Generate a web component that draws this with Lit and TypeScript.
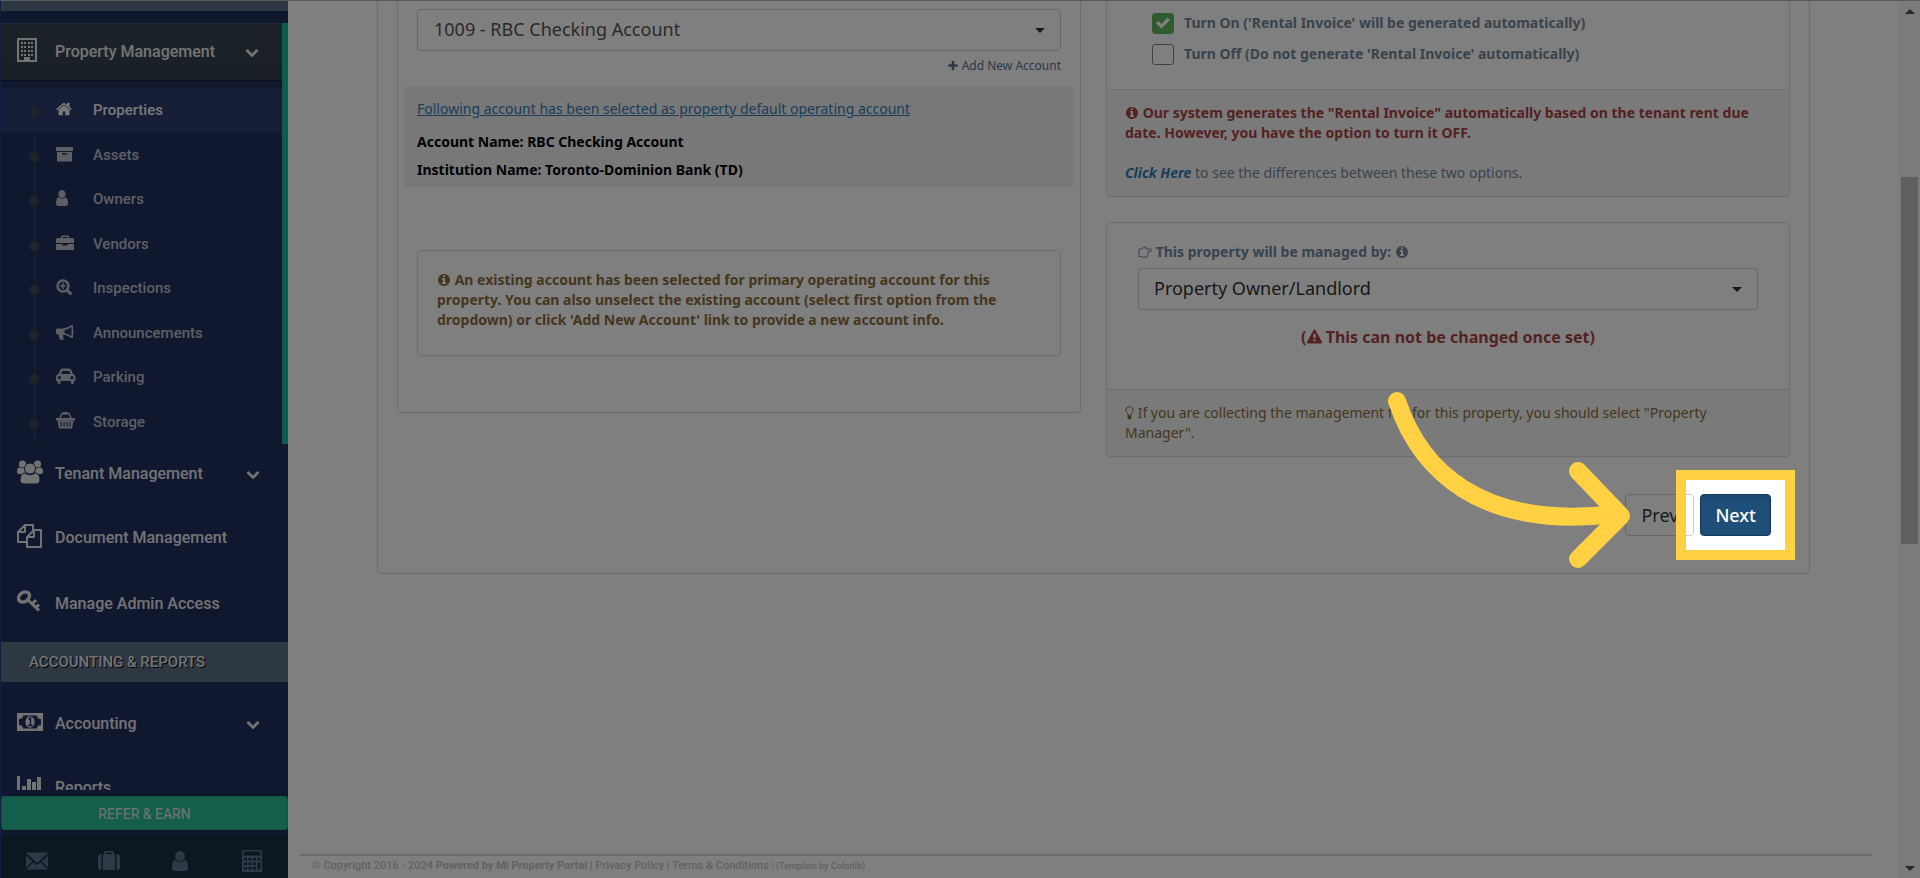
import { LitElement, html, svg, css, type TemplateResult } from "lit";
import { customElement, state } from "lit/decorators.js";

const fa = (d: string, box = "0 0 1792 1792") => html`<svg class="fa" viewBox=${box} aria-hidden="true"><path d=${d} /></svg>`;

const INFO =
  "M1152 1376v-160q0-14-9-23t-23-9h-96v-512q0-14-9-23t-23-9h-320q-14 0-23 9t-9 23v160q0 14 9 23t23 9h96v320h-96q-14 0-23 9t-9 23v160q0 14 9 23t23 9h448q14 0 23-9t9-23zm-128-896v-160q0-14-9-23t-23-9h-192q-14 0-23 9t-9 23v160q0 14 9 23t23 9h192q14 0 23-9t9-23zm640 416q0 209-103 385.5t-279.5 279.5-385.5 103-385.5-103-279.5-279.5-103-385.5 103-385.5 279.5-279.5 385.5-103 385.5 103 279.5 279.5 103 385.5z";
const PLUS =
  "M1600 736v192q0 40-28 68t-68 28h-416v416q0 40-28 68t-68 28h-192q-40 0-68-28t-28-68v-416h-416q-40 0-68-28t-28-68v-192q0-40 28-68t68-28h416v-416q0-40 28-68t68-28h192q40 0 68 28t28 68v416h416q40 0 68 28t28 68z";
const WARN =
  "M1024 1375v-190q0-14-9.5-23.5t-22.5-9.5h-192q-13 0-22.5 9.5t-9.5 23.5v190q0 14 9.5 23.5t22.5 9.5h192q13 0 22.5-9.5t9.5-23.5zm-2-374l18-459q0-12-10-19-13-11-24-11h-220q-11 0-24 11-10 7-10 21l17 457q0 10 10 16.5t24 6.5h185q14 0 23.5-6.5t10.5-16.5zm-14-934l768 1408q35 63-2 126-17 29-46.5 46t-63.5 17h-1536q-34 0-63.5-17t-46.5-46q-37-63-2-126l768-1408q17-31 47-49t65-18 65 18 47 49z";
const CHEVRON =
  "M1683 808l-742 741q-19 19-45 19t-45-19l-742-741q-19-19-19-45.5t19-45.5l166-165q19-19 45-19t45 19l531 531 531-531q19-19 45-19t45 19l166 165q19 19 19 45.5t-19 45.5z";
const HOME =
  "M1472 992v480q0 26-19 45t-45 19h-384v-384h-256v384h-384q-26 0-45-19t-19-45v-480q0-1 .5-3t.5-3l575-474 575 474q1 2 1 6zm223-69l-62 74q-8 9-21 11h-3q-13 0-21-7l-692-577-692 577q-12 8-24 7-13-2-21-11l-62-74q-8-10-7-23.5t11-21.5l719-599q32-26 76-26t76 26l244 204v-195q0-14 9-23t23-9h192q14 0 23 9t9 23v408l219 182q10 8 11 21.5t-7 23.5z";
const USER =
  "M1536 1399q0 109-62.5 187t-150.5 78h-854q-88 0-150.5-78t-62.5-187q0-85 8.5-160.5t31.5-152 58.5-131 94-89 134.5-34.5q131 128 313 128t313-128q76 0 134.5 34.5t94 89 58.5 131 31.5 152 8.5 160.5zm-256-887q0 159-112.5 271.5t-271.5 112.5-271.5-112.5-112.5-271.5 112.5-271.5 271.5-112.5 271.5 112.5 112.5 271.5z";

const ic = (w: number, h: number, body: unknown) =>
  html`<svg class="ic" width=${w} height=${h} viewBox="0 0 ${w} ${h}" aria-hidden="true">${body}</svg>`;

const windows = [4, 8, 12, 16].flatMap((y) => [4, 7, 11, 14].map((x) => svg`<rect x=${x} y=${y} width="2" height="2"/>`));

const ICONS: Record<string, TemplateResult> = {
  building: ic(20, 24, svg`<rect x="1" y="1" width="18" height="22" fill="none" stroke="currentColor" stroke-width="2"/>${windows}<path d="M7 19h6v4H7z"/>`),
  users: ic(26, 24, svg`<circle cx="5.5" cy="4" r="3.6"/><circle cx="20.5" cy="4" r="3.6"/><path d="M0 12q0-5 3-4.500q2 1 5 .5q-1 3 1 6H2Q0 14 0 12zM26 12q0-5-3-4.500q-2 1-5 .5q1 3-1 6h7Q26 14 26 12z"/><g stroke="#203060" stroke-width="1"><circle cx="13" cy="8.500" r="5.500"/><path d="M3 20.500q0-7.500 5-7.500q5 3.500 10 0q5 0 5 7.500q0 3.500-4 3.500H7q-4 0-4-3.500z"/></g>`),
  copy: ic(26, 24, svg`<g fill="none" stroke="currentColor" stroke-width="2" stroke-linejoin="round"><path d="M9 18H1V8l7-7h8v5M8 1v7H1"/><path d="M10 23V13l7-7h7v17zM17 6v7h-7"/></g>`),
  key: ic(26, 24, svg`<g fill="none" stroke="currentColor"><ellipse cx="7" cy="7" rx="6" ry="4.500" stroke-width="3.500" transform="rotate(-38 7 7)"/><path d="M11 10l11 10.500M15 14l4-4M19 17.500l3-3" stroke-width="3"/></g>`),
  money: ic(26, 18, svg`<path fill-rule="evenodd" d="M0 0h26v18H0zM6 2.500Q6 6 2 6v6q4 0 4 3.500h14q0-3.500 4-3.500V6q-4 0-4-3.500z"/><ellipse cx="13" cy="9" rx="4.600" ry="5.800"/><path d="M11.500 6.500L13.500 5v7M11 12.500h4.500" fill="none" stroke="#203060" stroke-width="1.500"/>`),
  chart: ic(26, 20, svg`<path d="M0 0h3v17h23v2H0zM5 10h4v6H5zM10 3h4v13h-4zM15 6h4v10h-4zM20 1h4v15h-4z"/>`),
  home: html`<svg class="ic" width="16" height="16" viewBox="64 64 1664 1664" aria-hidden="true"><path d=${HOME} /></svg>`,
  box: ic(17, 16, svg`<path fill-rule="evenodd" d="M0 1h17v4H0zM1 6h15v9.500H1zM6 7v1.500h5V7z"/>`),
  user: html`<svg class="ic" width="12" height="16" viewBox="256 128 1280 1536" preserveAspectRatio="none" aria-hidden="true"><path d=${USER} /></svg>`,
  briefcase: ic(18, 16, svg`<path fill-rule="evenodd" d="M5 3V1.500Q5 .5 6 .5h6q1 0 1 1V3h3.500Q18 3 18 4.500V8H0V4.500Q0 3 1.500 3zM6.500 3h5V2h-5zM0 9h6.500v1.500h5V9H18v6H0z"/>`),
  zoom: ic(17, 16, svg`<g fill="none" stroke="currentColor"><circle cx="7" cy="7" r="5.500" stroke-width="2.500"/><path d="M4 7h6M7 4v6" stroke-width="1.500"/><path d="M11 11l4.500 4.500" stroke-width="3"/></g>`),
  horn: ic(18, 16, svg`<path fill-rule="evenodd" d="M1 4.500h6Q12 4 15.500 1H17v5q1.500 1.500 0 3v5h-1.500Q12 11 7.500 10.500Q6.500 12 8 15q-2 1.500-4 .5Q2.500 13 2.800 10.500H1.500Q0 10.500 0 9V6Q0 4.500 1 4.500zM15.500 3Q12 5.500 8.500 6v3.200q3.500.3 7 3z"/>`),
  car: ic(20, 16, svg`<path fill-rule="evenodd" d="M2.500 6L4.200 2Q4.800.500 6.500.500h6.500Q14.700.500 15.300 2L17 6q2.500.5 2.500 3v4h-1.500v1.500q0 1.500-1.500 1.500T15 14.500V13H4.500v1.500Q4.500 16 3 16T1.500 14.500V13H0V9Q0 6.500 2.500 6zM5 6h9.500L13.300 3H6.200zM3.500 8a1.600 1.600 0 1 0 .01 0zM16 8a1.600 1.600 0 1 0 .01 0z"/>`),
  basket: ic(19, 17, svg`<path d="M3.500 7L6 1.500h7L15.500 7" fill="none" stroke="currentColor" stroke-width="1.500"/><path d="M7 0h5v2.500H7zM0 6h19v2.500H0z"/><path fill-rule="evenodd" d="M1.500 8.500h16L16 16.500H3zM4.500 10v4.500h1.200V10zM7.500 10v4.500h1.200V10zM10.500 10v4.500h1.200V10zM13.300 10v4.500h1.200V10z"/>`),
  mail: ic(22, 18, svg`<path d="M1 .500h20q1 0 .5 1L11 11 .500 1.500Q0 .500 1 .500zM0 3.500L6.500 9.500 0 15.500zM22 3.500L15.500 9.500l6.500 6zM7.500 10.500L11 13.300l3.500-2.800 7 6.500q-.5.500-1 .5h-19q-.5 0-1-.5z"/>`),
  suitcase: ic(22, 20, svg`<path d="M7 3V2q0-1.500 1.500-1.500h5Q15 .500 15 2v1" fill="none" stroke="currentColor" stroke-width="1.800"/><path d="M5 3h12v16H5zM3.500 3v16Q0 19 0 16.500v-11Q0 3 3.500 3zM18.500 3v16q3.500 0 3.500-2.500v-11Q22 3 18.500 3z"/>`),
  person: html`<svg class="ic" width="16" height="20" viewBox="256 128 1280 1536" preserveAspectRatio="none" aria-hidden="true"><path d=${USER} /></svg>`,
  calc: ic(20, 22, svg`<path fill-rule="evenodd" d="M0 0h20v22H0zM1.500 1.500v4h17v-4zM2 8v2.500h3V8zM6.500 8v2.500h3V8zM11 8v2.500h3V8zM15.500 8v2.500h3V8zM2 12.500V15h3v-2.500zM6.500 12.500V15h3v-2.500zM11 12.500V15h3v-2.500zM15.500 12.500v7h3v-7zM2 17v2.500h3V17zM6.500 17v2.500h3V17zM11 17v2.500h3V17z"/>`),
};

const CHILDREN: [string, string][] = [
  ["home", "Properties"],
  ["box", "Assets"],
  ["user", "Owners"],
  ["briefcase", "Vendors"],
  ["zoom", "Inspections"],
  ["horn", "Announcements"],
  ["car", "Parking"],
  ["basket", "Storage"],
];

@customElement("app-root")
export class AppRoot extends LitElement {
  @state() private invoice = "on";

  static styles = css`
    :host {
      display: block;
      height: 100vh;
      overflow: hidden;
      font-family: "Noto Sans", sans-serif;
      font-size: 14px;
      line-height: 20px;
      color: #73879c;
      position: relative;
    }
    * { box-sizing: border-box; }
    a { color: inherit; text-decoration: none; }
    svg { fill: currentColor; display: block; flex: none; }
    .fa { display: inline-block; width: 14px; height: 14px; vertical-align: -2px; }
    .app { display: flex; height: 100%; border-top: 1px solid #b4b4b4; background: #fff; }

    /* Sidebar */
    .side {
      width: 288px; flex: none; display: flex; flex-direction: column;
      background: #203060; border-left: 1px solid #203e80;
      font-family: Roboto, sans-serif; color: #e7e7e7;
    }
    .nav { flex: 1; min-height: 0; overflow: hidden; }
    .strip { height: 10px; background: #5c7084; margin-bottom: 12px; }
    .group { border-right: 6px solid #1abb9c; height: 421px; }
    .row {
      display: grid; grid-template-columns: 38px 1fr 42px; align-items: center;
      height: 64px; padding-left: 16px; font-size: 16px; font-weight: 500;
    }
    .row .fa { width: 14px; height: 14px; }
    .row .ic { margin-bottom: 4px; }
    .row.open {
      height: 58px; background: linear-gradient(#364650, #32424c);
      border-top: 1px solid #40525e; border-bottom: 1px solid #141d38;
      grid-template-columns: 38px 1fr 37px;
    }
    .row.first { height: 60px; }
    .row.tall { height: 68px; }
    .kids { margin: 7px 0 0; padding: 0; list-style: none; height: 356px; display: grid; grid-auto-rows: 1fr; }
    .kid {
      display: grid; grid-template-columns: 37px 1fr; align-items: center;
      padding-left: 55px; font-size: 15px; font-weight: 500; color: #bcbfca; position: relative;
    }
    .kid.current { background: #2d3b6c; color: #f0f0f0; }
    .kid .ic { margin-bottom: 2px; }
    .kid::before { content: ""; position: absolute; left: 33px; top: 0; bottom: 0; width: 1px; background: #3a4a56; }
    .kid::after { content: ""; position: absolute; left: 28px; top: 19px; width: 10px; height: 10px; border-radius: 50%; background: #3a4a56; }
    .section {
      height: 40px; margin: 6px 0 10px; padding-left: 28px; background: #5c7084; font-size: 15px; line-height: 40px;
      font-weight: 500; text-shadow: 1px 1px #000;
    }
    .refer {
      border: 1px solid #26a98a; border-radius: 3px; background: #28be96; color: #e7e7e7; height: 34px; margin: 6px 0;
      font: 400 14px/20px Roboto, sans-serif; padding: 2px 0 0;
    }
    .tools { height: 42px; background: #1a2e40; display: grid; grid-template-columns: repeat(4, 1fr); color: #5a738e; }
    .tools a { display: flex; align-items: center; justify-content: center; padding-top: 8px; }

    /* Content */
    .main { flex: 1; display: flex; flex-direction: column; }
    .well {
      margin: 0 89px; border: 1px solid #ddd; border-top: 0; border-radius: 0 0 4px 4px; padding: 0 19px 30px;
    }
    .cols { display: grid; grid-template-columns: 1fr 1fr; gap: 25px; align-items: start; }
    .panel { border: 1px solid #ddd; border-radius: 4px; box-shadow: 0 1px 1px rgba(0, 0, 0, 0.05); }
    .cut { border-top: 0; border-top-left-radius: 0; border-top-right-radius: 0; }
    .left { padding: 8px 19px 56px; }
    .pick { display: grid; align-items: center; }
    .pick > * { grid-area: 1 / 1; }
    select {
      appearance: none; width: 100%; height: 42px; border: 1px solid #ccc; border-radius: 4px; background: #fff;
      font: 400 18px/24px "Noto Sans", sans-serif; padding: 0 30px 2px 16px; color: #555;
    }
    .dark select { color: #333; padding-left: 15px; }
    .pick svg { justify-self: end; margin-right: 16px; width: 10px; height: 5px; color: #333; pointer-events: none; }
    .add { display: block; text-align: right; font-size: 12px; line-height: 20px; margin-top: 5px; color: #5a738e; }
    .add .fa { width: 12px; height: 12px; }
    .chosen { margin: 11px -12px 0 -13px; padding: 12px 13px; height: 100px; background: #f0f0f0; color: #000; font-weight: 700; }
    .chosen a { font-weight: 400; color: #337ab7; text-decoration: underline; }
    .chosen p { margin: 0 0 8px; }
    .chosen p:first-child { margin-bottom: 13px; }
    .note { margin-top: 63px; border: 1px solid #ddd; border-radius: 4px; box-shadow: 0 1px 1px rgba(0, 0, 0, 0.05); padding: 19px 19px 25px; color: #8a6d3b; font-weight: 700; }
    .note p { margin: 0; }
    .right { display: grid; gap: 25px; }
    .opts { padding: 11px 45px 24px; display: grid; gap: 9px; font-weight: 700; }
    .opts label { display: flex; align-items: center; gap: 10px; height: 22px; }
    .tick { display: grid; place-items: center; width: 22px; height: 22px; }
    .tick > * { grid-area: 1 / 1; }
    .tick svg { color: #fff; pointer-events: none; }
    input { appearance: none; margin: 0; width: 22px; height: 21px; border: 1px solid #73879c; border-radius: 3px; background: #fff; }
    input:checked { background: #5cb85c; border-color: #5cb85c; }
    .foot { border-top: 1px solid #ddd; background: #f5f5f5; padding: 13px 18px; border-radius: 0 0 4px 4px; }
    .foot p { margin: 0; }
    .foot .red { margin-bottom: 20px; color: #a94442; font-weight: 700; }
    .foot a { color: #337ab7; font-weight: 700; font-style: italic; }
    .foot.brown { color: #8a6d3b; }
    .foot .bulb { width: 9px; }
    .manage { padding: 19px 31px 41px; }
    .manage label { display: block; font-weight: 700; margin-bottom: 6px; }
    .warn { margin: 16px 0 0; text-align: center; font-size: 16px; line-height: 22px; font-weight: 700; color: #a94442; }
    .warn .fa { width: 15px; height: 16px; }
    .actions { display: flex; justify-content: flex-end; gap: 6px; padding: 37px 19px 7px 0; }
    button { cursor: pointer; }
    .btn { height: 42px; border-radius: 4px; padding: 0 15px 1px; font: 400 18px/24px "Noto Sans", sans-serif; border: 1px solid #ccc; background: #fff; color: #333; }
    .next { background: #1f4e79; border-color: #163a5b; color: #fff; font-weight: 500; padding: 0 14px 1px; box-shadow: inset 0 2px 4px rgba(0, 0, 0, 0.12); }
    .hold { position: relative; }
    .spot {
      position: absolute; inset: -24px; border: 10px solid #ffd143; z-index: 2; pointer-events: none;
    }
    .veil { position: absolute; inset: -14px; box-shadow: 0 0 0 4000px rgba(0, 0, 0, 0.5); z-index: 1; pointer-events: none; }
    .arrow { position: absolute; right: 137px; top: -110px; z-index: 3; pointer-events: none; width: 250px; height: 190px; }
    .credit {
      margin: auto 27px 0 12px; border-top: 2px solid #d4d4d4; height: 24px; padding-left: 12px;
      font: 400 11px/20px Roboto, sans-serif; color: #c4c4c4;
    }
    .credit b { font-weight: 700; }
    .credit, .credit a { font-weight: 500; }
    .credit small { font-size: 9px; }
    .bar { width: 21px; background: #f6f6f6; display: flex; flex-direction: column; align-items: center; padding: 8px 2px 7px; color: #505050; }
    .bar svg { width: 10px; height: 5px; }
    .thumb { width: 17px; height: 367px; background: #c1c1c1; margin-top: 163px; margin-bottom: auto; }
  `;

  private caret = html`<svg viewBox="0 0 10 5" aria-hidden="true"><path d="M0 0h10L5 5z" /></svg>`;

  private option(value: string, text: string) {
    const on = this.invoice === value;
    return html`<label
      ><span class="tick"
        ><input type="checkbox" .checked=${on} @change=${() => (this.invoice = value)} />${on
          ? html`<svg width="14" height="12" viewBox="0 0 14 12"><path d="M0 6.500L2.500 4 5.500 7 11.500.500 14 3 5.500 11.500z" /></svg>`
          : ""}</span
      >${text}</label
    >`;
  }

  private row(icon: string, text: string, arrow = false, cls = "") {
    return html`<a class="row ${cls}" href="#">${ICONS[icon]}<span>${text}</span>${arrow ? fa(CHEVRON) : ""}</a>`;
  }

  render() {
    return html`
      <div class="app">
        <nav class="side">
          <div class="nav">
            <div class="strip"></div>
            <div class="group">
              ${this.row("building", "Property Management", true, "open")}
              <ul class="kids">
                ${CHILDREN.map(([i, t], n) => html`<li class="kid ${n ? "" : "current"}">${ICONS[i]}<a href="#">${t}</a></li>`)}
              </ul>
            </div>
            ${this.row("users", "Tenant Management", true, "first")}
            ${this.row("copy", "Document Management", false, "tall")}
            ${this.row("key", "Manage Admin Access")}
            <h3 class="section">ACCOUNTING &amp; REPORTS</h3>
            ${this.row("money", "Accounting", true)} ${this.row("chart", "Reports")}
          </div>
          <button class="refer">REFER &amp; EARN</button>
          <div class="tools">
            <a href="#" aria-label="Mail">${ICONS.mail}</a><a href="#" aria-label="Portfolio">${ICONS.suitcase}</a
            ><a href="#" aria-label="Profile">${ICONS.person}</a><a href="#" aria-label="Calculator">${ICONS.calc}</a>
          </div>
        </nav>
        <main class="main">
          <section class="well">
            <div class="cols">
              <div class="panel cut left">
                <div class="pick">
                  <select aria-label="Operating account"><option>1009 - RBC Checking Account</option></select>${this.caret}
                </div>
                <a class="add" href="#">${fa(PLUS)} Add New Account</a>
                <div class="chosen">
                  <p><a href="#">Following account has been selected as property default operating account</a></p>
                  <p>Account Name: RBC Checking Account</p>
                  <p>Institution Name: Toronto-Dominion Bank (TD)</p>
                </div>
                <div class="note">
                  <p>${fa(INFO)} An existing account has been selected for primary operating account for this property. You can also unselect the existing account (select first option from the dropdown) or click 'Add New Account' link to provide a new account info.</p>
                </div>
              </div>
              <div class="right">
                <div class="panel cut">
                  <div class="opts">
                    ${this.option("on", "Turn On ('Rental Invoice' will be generated automatically)")}
                    ${this.option("off", "Turn Off (Do not generate 'Rental Invoice' automatically)")}
                  </div>
                  <div class="foot">
                    <p class="red">${fa(INFO)} Our system generates the "Rental Invoice" automatically based on the tenant rent due date. However, you have the option to turn it OFF.</p>
                    <p><a href="#">Click Here</a> to see the differences between these two options.</p>
                  </div>
                </div>
                <div class="panel">
                  <div class="manage">
                    <label for="manager"
                      ><svg class="fa" viewBox="0 0 14 12" aria-hidden="true"><path d="M1 3h2.500L7 .800Q8.500.500 8 3h4.500a1.200 1.200 0 0 1 0 2.500H10q1 1 0 2 .5 1-.500 1.800 0 2-1.500 2H5L3.500 10.500H1z" fill="none" stroke="currentColor" /></svg>
                      This property will be managed by: ${fa(INFO)}</label
                    >
                    <div class="pick dark">
                      <select id="manager"><option>Property Owner/Landlord</option></select>${this.caret}
                    </div>
                    <p class="warn">(${fa(WARN)} This can not be changed once set)</p>
                  </div>
                  <div class="foot brown">
                    <p><svg class="fa bulb" viewBox="0 0 9 14" aria-hidden="true"><path d="M3 9Q2.800 7.500 1.800 6.500A3.600 3.600 0 1 1 7.200 6.500Q6.200 7.500 6 9z" fill="none" stroke="currentColor" /><path d="M2.500 9.500h4v2.500L5.500 13.500h-2L2.500 12z" /></svg>
                      If you are collecting the management fee for this property, you should select "Property Manager".</p>
                  </div>
                </div>
              </div>
            </div>
            <div class="actions">
              <button class="btn">Prev</button>
              <div class="hold">
                <button class="btn next">Next</button>
                <div class="veil"></div>
                <div class="spot"></div>
                <svg class="arrow" viewBox="1384 384 250 190" aria-hidden="true">
                  <g fill="none" stroke="#ffd143" stroke-width="18" stroke-linecap="round" stroke-linejoin="round">
                    <path d="M1397 401C1420 470 1480 530 1615 514" />
                    <path d="M1578 471L1621 516L1578 559" />
                  </g>
                </svg>
              </div>
            </div>
          </section>
          <footer class="credit">
            © Copyright 2016 - 2024 <b>Powered by Mi Property Portal</b> | <a href="#">Privacy Policy</a> | <a href="#">Terms &amp; Conditions</a>
            <small>| (Template by Colorlib)</small>
          </footer>
        </main>
        <div class="bar" aria-hidden="true">
          <svg viewBox="0 0 10 5"><path d="M0 5h10L5 0z" /></svg>
          <div class="thumb"></div>
          ${this.caret}
        </div>
      </div>
    `;
  }
}
